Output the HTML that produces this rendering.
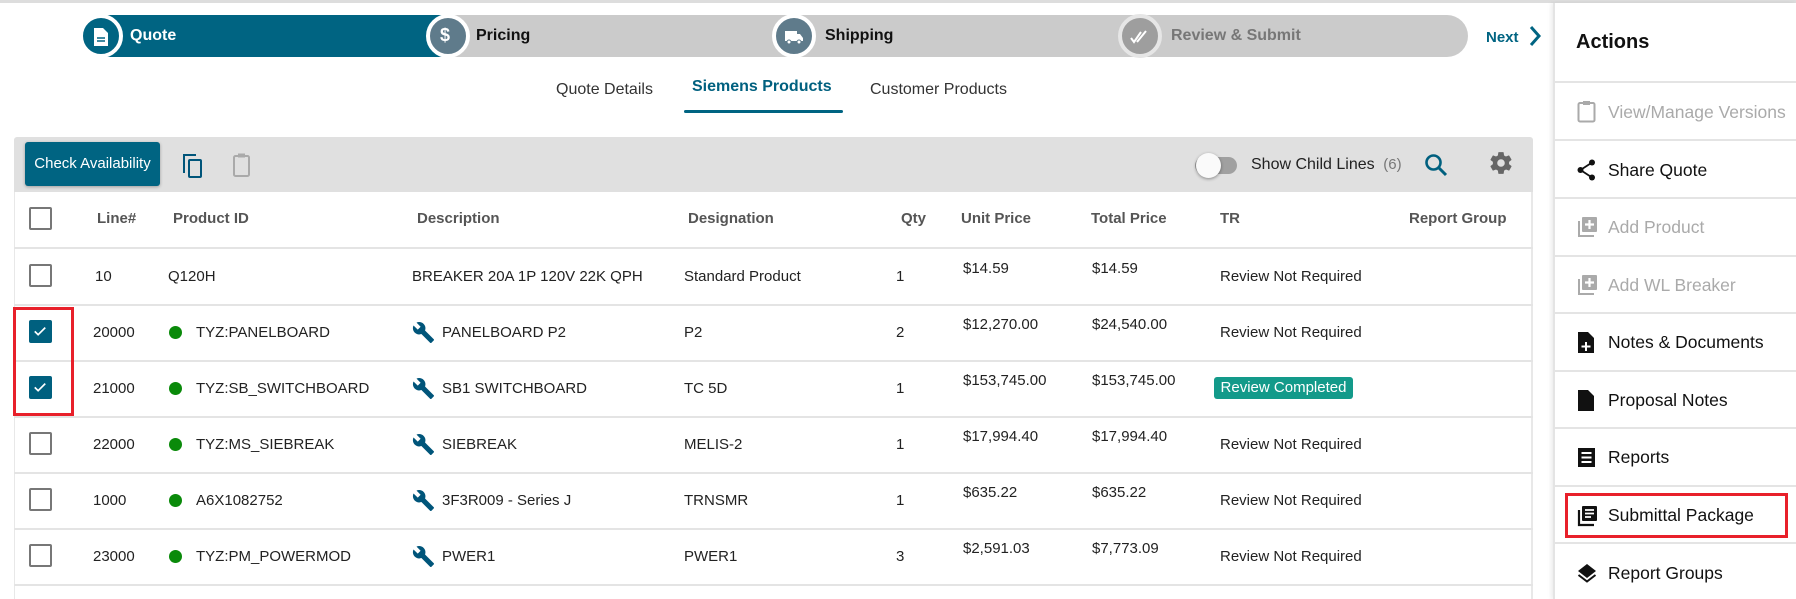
<!DOCTYPE html>
<html><head><meta charset="utf-8"><style>
*{box-sizing:border-box;margin:0;padding:0}
body{width:1796px;height:599px;overflow:hidden;background:#fff;font-family:"Liberation Sans",Arial,sans-serif;color:#222;position:relative}
.a{position:absolute;white-space:nowrap}
.topline{position:absolute;left:0;top:0;width:1796px;height:3px;background:#ddd}
.bar{position:absolute;left:82px;top:15px;width:1386px;height:42px;border-radius:21px;background:#cbcbcb}
.barq{position:absolute;left:82px;top:15px;width:370px;height:42px;border-radius:21px 0 0 21px;background:#006482}
.circ{position:absolute;width:44px;height:44px;border-radius:50%;border:4px solid #fff;top:14px}
.step{position:absolute;top:27px;font-weight:bold;font-size:16px}
.tab{position:absolute;top:81px;font-size:16px;color:#333}
.tb{position:absolute;left:14px;top:137px;width:1519px;height:55px;background:#e0e0e0;border-radius:3px 3px 0 0}
.tbl{position:absolute;left:14px;top:192px;width:1519px;height:407px;border-left:1px solid #e8e8e8;border-right:2px solid #e8e8e8}
.hl{position:absolute;left:14px;width:1519px;height:2px;background:#e4e4e4}
.h{position:absolute;top:210px;font-weight:bold;font-size:15px;color:#555}
.c{position:absolute;font-size:15px;color:#222}
.cb{position:absolute;left:29px;width:23px;height:23px;border:2.5px solid #777;border-radius:2px;background:#fff}
.cbk{background:#00607f;border-color:#00607f}
.dot{position:absolute;left:169px;width:13px;height:13px;border-radius:50%;background:#0a8a0a}
.panel{position:absolute;left:1553px;top:3px;width:243px;height:596px;border-left:2px solid #e4e4e4;box-shadow:-2px 0 4px rgba(0,0,0,.08)}
.pl{position:absolute;left:1555px;width:241px;height:2px;background:#e4e4e4}
.pi{position:absolute;left:1608px;font-size:17.5px;color:#111}
.dis{color:#aaa}
.ic{position:absolute;left:1577px}
</style></head><body>
<div class="topline"></div>
<div class="bar"></div><div class="barq"></div>
<div class="circ" style="left:79px;background:#006482"></div>
<svg class="a" style="left:92px;top:27px" width="18" height="20" viewBox="0 0 18 20"><path d="M2 1h9l5 5v13H2z" fill="#fff"/><path d="M5 11h8M5 14h8" stroke="#006482" stroke-width="1.6"/></svg>
<div class="step" style="left:130px;color:#fff">Quote</div>
<div class="circ" style="left:426px;background:#5f7b8b"></div>
<div class="a" style="left:440px;top:25px;color:#fff;font-weight:bold;font-size:18px">$</div>
<div class="step" style="left:476px;color:#111">Pricing</div>
<div class="circ" style="left:772px;background:#5f7b8b"></div>
<svg class="a" style="left:784px;top:29px" width="20" height="16" viewBox="0 0 20 16"><rect x="1" y="2" width="12" height="10" fill="#fff"/><path d="M13 5h3l3 4v3h-6z" fill="#fff"/><circle cx="5" cy="13" r="2" fill="#fff" stroke="#5f7b8b"/><circle cx="15" cy="13" r="2" fill="#fff" stroke="#5f7b8b"/></svg>
<div class="step" style="left:825px;color:#111">Shipping</div>
<div class="circ" style="left:1118px;background:#9e9e9e;border-color:#e6e6e6"></div>
<svg class="a" style="left:1130px;top:30px" width="20" height="14" viewBox="0 0 20 14"><path d="M1 8l3 4 7-10M7 12l9-11" stroke="#fff" stroke-width="2" fill="none"/></svg>
<div class="step" style="left:1171px;color:#777">Review &amp; Submit</div>
<div class="a" style="left:1486px;top:29px;color:#006482;font-weight:bold;font-size:15px">Next</div>
<svg class="a" style="left:1528px;top:25px" width="14" height="22" viewBox="0 0 14 22"><path d="M3 2l8 9-8 9" stroke="#006482" stroke-width="3" fill="none"/></svg>

<div class="tab" style="left:556px">Quote Details</div>
<div class="tab" style="left:692px;top:78px;font-weight:bold;color:#00607f">Siemens Products</div>
<div class="a" style="left:684px;top:110px;width:159px;height:3px;background:#006482;border-radius:2px"></div>
<div class="tab" style="left:870px">Customer Products</div>

<div class="tb"></div>
<div class="a" style="left:25px;top:142px;width:135px;height:44px;background:#006482;border-radius:3px;color:#fff;font-size:15px;line-height:44px;text-align:center;box-shadow:0 1px 3px rgba(0,0,0,.3)">Check Availability</div>
<svg class="a" style="left:182px;top:153px" width="22" height="26" viewBox="0 0 22 26"><path d="M2 20V2h12" stroke="#00557a" stroke-width="2" fill="none"/><rect x="7" y="7" width="12" height="17" stroke="#00557a" stroke-width="2" fill="none" rx="1"/></svg>
<svg class="a" style="left:232px;top:152px" width="20" height="26" viewBox="0 0 20 26"><rect x="2" y="4" width="15" height="20" rx="1.5" stroke="#aaa" stroke-width="2" fill="none"/><rect x="6" y="1.5" width="7" height="4" fill="#aaa"/></svg>
<div class="a" style="left:1195px;top:157px;width:42px;height:17px;border-radius:9px;background:#a0a0a0"></div>
<div class="a" style="left:1196px;top:153px;width:25px;height:25px;border-radius:50%;background:#fafafa;box-shadow:0 1px 3px rgba(0,0,0,.4)"></div>
<div class="a" style="left:1251px;top:156px;font-size:16px;color:#222">Show Child Lines <span style="color:#777;font-size:15px">&nbsp;(6)</span></div>
<svg class="a" style="left:1424px;top:153px" width="24" height="24" viewBox="0 0 24 24"><circle cx="9.5" cy="9.5" r="7" stroke="#00607f" stroke-width="2.6" fill="none"/><path d="M14.5 14.5L22 22" stroke="#00607f" stroke-width="3"/></svg>
<svg class="a" style="left:1488px;top:150px" width="26" height="26" viewBox="0 0 24 24"><path fill="#666" d="M19.4 13c.04-.33.06-.66.06-1s-.02-.67-.06-1l2.1-1.650c.19-.15.24-.42.12-.64l-2-3.46c-.12-.22-.39-.3-.61-.22l-2.49 1c-.52-.4-1.08-.73-1.690-.98l-.38-2.65A.49.49 0 0 0 14 2h-4c-.25 0-.46.18-.49.42l-.38 2.65c-.61.25-1.170.59-1.690.98l-2.49-1c-.23-.09-.49 0-.61.22l-2 3.46c-.13.22-.07.49.12.64L4.56 11c-.04.33-.06.67-.06 1s.02.67.06 1l-2.1 1.65c-.19.15-.24.42-.12.64l2 3.46c.12.22.39.3.61.22l2.49-1c.52.4 1.08.73 1.69.98l.38 2.65c.03.24.24.42.49.42h4c.25 0 .46-.18.49-.42l.38-2.65c.61-.25 1.17-.59 1.69-.98l2.49 1c.23.09.49 0 .61-.22l2-3.46c.12-.22.07-.49-.12-.64L19.4 13zM12 15.5a3.5 3.5 0 1 1 0-7 3.5 3.5 0 0 1 0 7z"/></svg>

<div class="tbl"></div>
<div class="cb" style="top:207px"></div>
<div class="h" style="left:97px">Line#</div>
<div class="h" style="left:173px">Product ID</div>
<div class="h" style="left:417px">Description</div>
<div class="h" style="left:688px">Designation</div>
<div class="h" style="left:901px">Qty</div>
<div class="h" style="left:961px">Unit Price</div>
<div class="h" style="left:1091px">Total Price</div>
<div class="h" style="left:1220px">TR</div>
<div class="h" style="left:1409px">Report Group</div>

<div class="hl" style="top:247px"></div>
<div class="hl" style="top:304px"></div>
<div class="hl" style="top:360px"></div>
<div class="hl" style="top:416px"></div>
<div class="hl" style="top:472px"></div>
<div class="hl" style="top:528px"></div>
<div class="hl" style="top:584px"></div>

<div class="cb" style="top:264px"></div>
<div class="c" style="left:95px;top:268px">10</div>
<div class="c" style="left:168px;top:268px">Q120H</div>
<div class="c" style="left:412px;top:268px">BREAKER 20A 1P 120V 22K QPH</div>
<div class="c" style="left:684px;top:268px">Standard Product</div>
<div class="c" style="left:896px;top:268px">1</div>
<div class="c" style="left:963px;top:260px">$14.59</div>
<div class="c" style="left:1092px;top:260px">$14.59</div>
<div class="c" style="left:1220px;top:268px">Review Not Required</div>

<svg width="0" height="0" style="position:absolute"><defs><symbol id="w" viewBox="0 0 24 24"><path fill="#00557a" d="M22.7 19l-9.1-9.1c.9-2.3.4-5-1.5-6.9-2-2-5-2.4-7.4-1.3L9 6 6 9 1.6 4.7C.4 7.1.9 10.1 2.9 12.1c1.9 1.9 4.6 2.4 6.9 1.5l9.1 9.1c.4.4 1 .4 1.4 0l2.3-2.3c.5-.4.5-1.1.1-1.4z"/></symbol>
<symbol id="k" viewBox="0 0 24 24"><path d="M5 12.5l4.5 4.5L19 7.5" stroke="#fff" stroke-width="2.2" fill="none"/></symbol></defs></svg>

<div class="cb cbk" style="top:320px"><svg width="18" height="18" style="position:absolute;left:0;top:0"><use href="#k" width="18" height="18"/></svg></div>
<div class="c" style="left:93px;top:324px">20000</div><div class="dot" style="top:326px"></div>
<div class="c" style="left:196px;top:324px">TYZ:PANELBOARD</div>
<svg class="a" style="left:412px;top:321px" width="23" height="23"><use href="#w" width="23" height="23"/></svg>
<div class="c" style="left:442px;top:324px">PANELBOARD P2</div>
<div class="c" style="left:684px;top:324px">P2</div><div class="c" style="left:896px;top:324px">2</div>
<div class="c" style="left:963px;top:316px">$12,270.00</div><div class="c" style="left:1092px;top:316px">$24,540.00</div>
<div class="c" style="left:1220px;top:324px">Review Not Required</div>

<div class="cb cbk" style="top:376px"><svg width="18" height="18" style="position:absolute;left:0;top:0"><use href="#k" width="18" height="18"/></svg></div>
<div class="c" style="left:93px;top:380px">21000</div><div class="dot" style="top:382px"></div>
<div class="c" style="left:196px;top:380px">TYZ:SB_SWITCHBOARD</div>
<svg class="a" style="left:412px;top:377px" width="23" height="23"><use href="#w" width="23" height="23"/></svg>
<div class="c" style="left:442px;top:380px">SB1 SWITCHBOARD</div>
<div class="c" style="left:684px;top:380px">TC 5D</div><div class="c" style="left:896px;top:380px">1</div>
<div class="c" style="left:963px;top:372px">$153,745.00</div><div class="c" style="left:1092px;top:372px">$153,745.00</div>
<div class="a" style="left:1214px;top:377px;width:139px;height:22px;border-radius:3px;background:#139a8a;color:#fff;font-size:15px;line-height:22px;text-align:center">Review Completed</div>

<div class="cb" style="top:432px"></div>
<div class="c" style="left:93px;top:436px">22000</div><div class="dot" style="top:438px"></div>
<div class="c" style="left:196px;top:436px">TYZ:MS_SIEBREAK</div>
<svg class="a" style="left:412px;top:433px" width="23" height="23"><use href="#w" width="23" height="23"/></svg>
<div class="c" style="left:442px;top:436px">SIEBREAK</div>
<div class="c" style="left:684px;top:436px">MELIS-2</div><div class="c" style="left:896px;top:436px">1</div>
<div class="c" style="left:963px;top:428px">$17,994.40</div><div class="c" style="left:1092px;top:428px">$17,994.40</div>
<div class="c" style="left:1220px;top:436px">Review Not Required</div>

<div class="cb" style="top:488px"></div>
<div class="c" style="left:93px;top:492px">1000</div><div class="dot" style="top:494px"></div>
<div class="c" style="left:196px;top:492px">A6X1082752</div>
<svg class="a" style="left:412px;top:489px" width="23" height="23"><use href="#w" width="23" height="23"/></svg>
<div class="c" style="left:442px;top:492px">3F3R009 - Series J</div>
<div class="c" style="left:684px;top:492px">TRNSMR</div><div class="c" style="left:896px;top:492px">1</div>
<div class="c" style="left:963px;top:484px">$635.22</div><div class="c" style="left:1092px;top:484px">$635.22</div>
<div class="c" style="left:1220px;top:492px">Review Not Required</div>

<div class="cb" style="top:544px"></div>
<div class="c" style="left:93px;top:548px">23000</div><div class="dot" style="top:550px"></div>
<div class="c" style="left:196px;top:548px">TYZ:PM_POWERMOD</div>
<svg class="a" style="left:412px;top:545px" width="23" height="23"><use href="#w" width="23" height="23"/></svg>
<div class="c" style="left:442px;top:548px">PWER1</div>
<div class="c" style="left:684px;top:548px">PWER1</div><div class="c" style="left:896px;top:548px">3</div>
<div class="c" style="left:963px;top:540px">$2,591.03</div><div class="c" style="left:1092px;top:540px">$7,773.09</div>
<div class="c" style="left:1220px;top:548px">Review Not Required</div>

<div class="a" style="left:13px;top:307px;width:61px;height:109px;border:3px solid #e8202a"></div>

<div class="panel"></div>
<div class="a" style="left:1576px;top:31px;font-size:20px;font-weight:bold;color:#111">Actions</div>
<div class="pl" style="top:81px"></div>
<div class="pl" style="top:139px"></div>
<div class="pl" style="top:197px"></div>
<div class="pl" style="top:255px"></div>
<div class="pl" style="top:312px"></div>
<div class="pl" style="top:370px"></div>
<div class="pl" style="top:427px"></div>
<div class="pl" style="top:485px"></div>
<div class="pl" style="top:542px"></div>

<svg class="ic" style="top:100px" width="20" height="23" viewBox="0 0 20 23"><rect x="1.5" y="3" width="16" height="18.5" rx="1.5" stroke="#aaa" stroke-width="2" fill="none"/><rect x="6" y="1" width="7" height="4" fill="#aaa"/></svg>
<div class="pi dis" style="top:102px">View/Manage Versions</div>
<svg class="ic" style="top:159px" width="20" height="22" viewBox="0 0 20 22"><circle cx="15" cy="3.5" r="3" fill="#111"/><circle cx="3.5" cy="11" r="3" fill="#111"/><circle cx="15" cy="18.5" r="3" fill="#111"/><path d="M15 3.5L3.5 11 15 18.5" stroke="#111" stroke-width="1.8" fill="none"/></svg>
<div class="pi" style="top:160px">Share Quote</div>
<svg class="ic" style="top:216px" width="21" height="22" viewBox="0 0 21 22"><path d="M2 5v15h15" stroke="#aaa" stroke-width="2" fill="none"/><rect x="5" y="1" width="15" height="15" rx="1" fill="#aaa"/><path d="M12.5 4v9M8 8.5h9" stroke="#fff" stroke-width="2.2"/></svg>
<div class="pi dis" style="top:217px">Add Product</div>
<svg class="ic" style="top:274px" width="21" height="22" viewBox="0 0 21 22"><path d="M2 5v15h15" stroke="#aaa" stroke-width="2" fill="none"/><rect x="5" y="1" width="15" height="15" rx="1" fill="#aaa"/><path d="M12.5 4v9M8 8.5h9" stroke="#fff" stroke-width="2.2"/></svg>
<div class="pi dis" style="top:275px">Add WL Breaker</div>
<svg class="ic" style="top:331px" width="18" height="23" viewBox="0 0 18 23"><path d="M1 1h10l6 6v15H1z" fill="#111"/><path d="M9 11v9M4.5 15.5h9" stroke="#fff" stroke-width="2"/></svg>
<div class="pi" style="top:332px">Notes &amp; Documents</div>
<svg class="ic" style="top:389px" width="18" height="23" viewBox="0 0 18 23"><path d="M1 1h10l6 6v15H1z" fill="#111"/></svg>
<div class="pi" style="top:390px">Proposal Notes</div>
<svg class="ic" style="top:447px" width="19" height="21" viewBox="0 0 19 21"><rect x="1" y="1" width="17" height="19" fill="#111"/><path d="M4.5 6h10M4.5 10.5h10M4.5 15h10" stroke="#fff" stroke-width="2"/></svg>
<div class="pi" style="top:447px">Reports</div>
<svg class="ic" style="top:505px" width="21" height="22" viewBox="0 0 21 22"><path d="M2 5v15h15" stroke="#111" stroke-width="2.2" fill="none"/><rect x="5" y="1" width="15" height="15" rx="1" fill="#111"/><path d="M8 5h9M8 8.5h9M8 12h6" stroke="#fff" stroke-width="1.8"/></svg>
<div class="pi" style="top:505px">Submittal Package</div>
<div class="a" style="left:1565px;top:493px;width:223px;height:45px;border:3px solid #e8202a"></div>
<svg class="ic" style="top:563px" width="20" height="21" viewBox="0 0 20 21"><path d="M10 1l9 7-9 7-9-7z" fill="#111"/><path d="M1.5 12l8.5 6.5 8.5-6.5" stroke="#111" stroke-width="2" fill="none"/></svg>
<div class="pi" style="top:563px">Report Groups</div>
</body></html>
